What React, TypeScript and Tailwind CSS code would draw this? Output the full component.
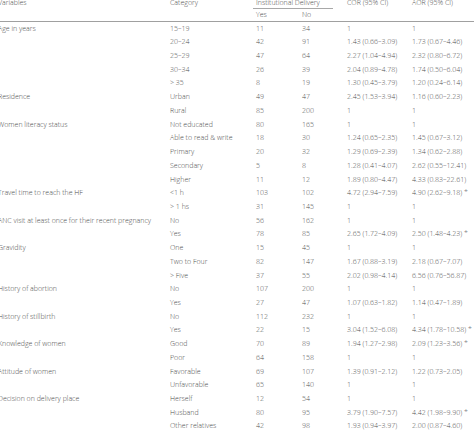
type Row = [string, string, string, string, string];

const groups: { name: string; rows: Row[] }[] = [
  {
    name: "Age in years",
    rows: [
      ["15–19", "11", "34", "1", "1"],
      ["20–24", "42", "91", "1.43 (0.66–3.09)", "1.73 (0.67–4.46)"],
      ["25–29", "47", "64", "2.27 (1.04–4.94)", "2.32 (0.80–6.72)"],
      ["30–34", "26", "39", "2.04 (0.89–4.78)", "1.74 (0.50–6.04)"],
      ["> 35", "8", "19", "1.30 (0.45–3.79)", "1.20 (0.24–6.14)"],
    ],
  },
  {
    name: "Residence",
    rows: [
      ["Urban", "49", "47", "2.45 (1.53–3.94)", "1.16 (0.60–2.23)"],
      ["Rural", "85", "200", "1", "1"],
    ],
  },
  {
    name: "Women literacy status",
    rows: [
      ["Not educated", "80", "165", "1", "1"],
      ["Able to read & write", "18", "30", "1.24 (0.65–2.35)", "1.45 (0.67–3.12)"],
      ["Primary", "20", "32", "1.29 (0.69–2.39)", "1.34 (0.62–2.88)"],
      ["Secondary", "5", "8", "1.28 (0.41–4.07)", "2.62 (0.55–12.41)"],
      ["Higher", "11", "12", "1.89 (0.80–4.47)", "4.33 (0.83–22.61)"],
    ],
  },
  {
    name: "Travel time to reach the HF",
    rows: [
      ["<1 h", "103", "102", "4.72 (2.94–7.59)", "4.90 (2.62–9.18) *"],
      ["> 1 hs", "31", "145", "1", "1"],
    ],
  },
  {
    name: "ANC visit at least once for their recent pregnancy",
    rows: [
      ["No", "56", "162", "1", "1"],
      ["Yes", "78", "85", "2.65 (1.72–4.09)", "2.50 (1.48–4.23) *"],
    ],
  },
  {
    name: "Gravidity",
    rows: [
      ["One", "15", "45", "1", "1"],
      ["Two to Four", "82", "147", "1.67 (0.88–3.19)", "2.18 (0.67–7.07)"],
      ["> Five", "37", "55", "2.02 (0.98–4.14)", "6.56 (0.76–56.87)"],
    ],
  },
  {
    name: "History of abortion",
    rows: [
      ["No", "107", "200", "1", "1"],
      ["Yes", "27", "47", "1.07 (0.63–1.82)", "1.14 (0.47–1.89)"],
    ],
  },
  {
    name: "History of stillbirth",
    rows: [
      ["No", "112", "232", "1", "1"],
      ["Yes", "22", "15", "3.04 (1.52–6.08)", "4.34 (1.78–10.58) *"],
    ],
  },
  {
    name: "Knowledge of women",
    rows: [
      ["Good", "70", "89", "1.94 (1.27–2.98)", "2.09 (1.23–3.56) *"],
      ["Poor", "64", "158", "1", "1"],
    ],
  },
  {
    name: "Attitude of women",
    rows: [
      ["Favorable", "69", "107", "1.39 (0.91–2.12)", "1.22 (0.73–2.05)"],
      ["Unfavorable", "65", "140", "1", "1"],
    ],
  },
  {
    name: "Decision on delivery place",
    rows: [
      ["Herself", "12", "54", "1", "1"],
      ["Husband", "80", "95", "3.79 (1.90–7.57)", "4.42 (1.98–9.90) *"],
      ["Other relatives", "42", "98", "1.93 (0.94–3.97)", "2.00 (0.87–4.60)"],
    ],
  },
];

const cols = "grid grid-cols-[172px_86px_46px_45px_65px_1fr]";

export default function App() {
  return (
    <div className="w-[474px] h-[432px] overflow-hidden bg-white">
      <div
        className="-ml-[2px] -mt-[2px] w-[476px] text-[7px] font-light text-[#4d4d4d] whitespace-nowrap"
        style={{ fontFamily: '"Open Sans", "DejaVu Sans", sans-serif' }}
      >
        {/* header */}
        <div className={cols}>
          <div className="h-[11px] flex items-center">Variables</div>
          <div className="h-[11px] flex items-center">Category</div>
          <div className="col-span-2">
            <div className="h-[11px] w-[80px] -ml-[3px] pl-[3px] flex items-center border-b border-[#a8a8a8]">
              Institutional Delivery
            </div>
          </div>
          <div className="h-[11px] flex items-center">COR (95% CI)</div>
          <div className="h-[11px] flex items-center">AOR (95% CI)</div>
        </div>
        <div className={`${cols} border-b border-[#a0a0a0]`}>
          <div className="h-[12px]" />
          <div />
          <div className="h-[12px] flex items-center">Yes</div>
          <div className="h-[12px] flex items-center">No</div>
          <div />
          <div />
        </div>

        {/* body */}
        {groups.map((g) =>
          g.rows.map((r, i) => (
            <div key={g.name + i} className={`${cols} h-[13.73px] items-center`}>
              <div>{i === 0 ? g.name : ""}</div>
              {r.map((c, j) => (
                <div key={j}>{c}</div>
              ))}
            </div>
          ))
        )}
      </div>
    </div>
  );
}
